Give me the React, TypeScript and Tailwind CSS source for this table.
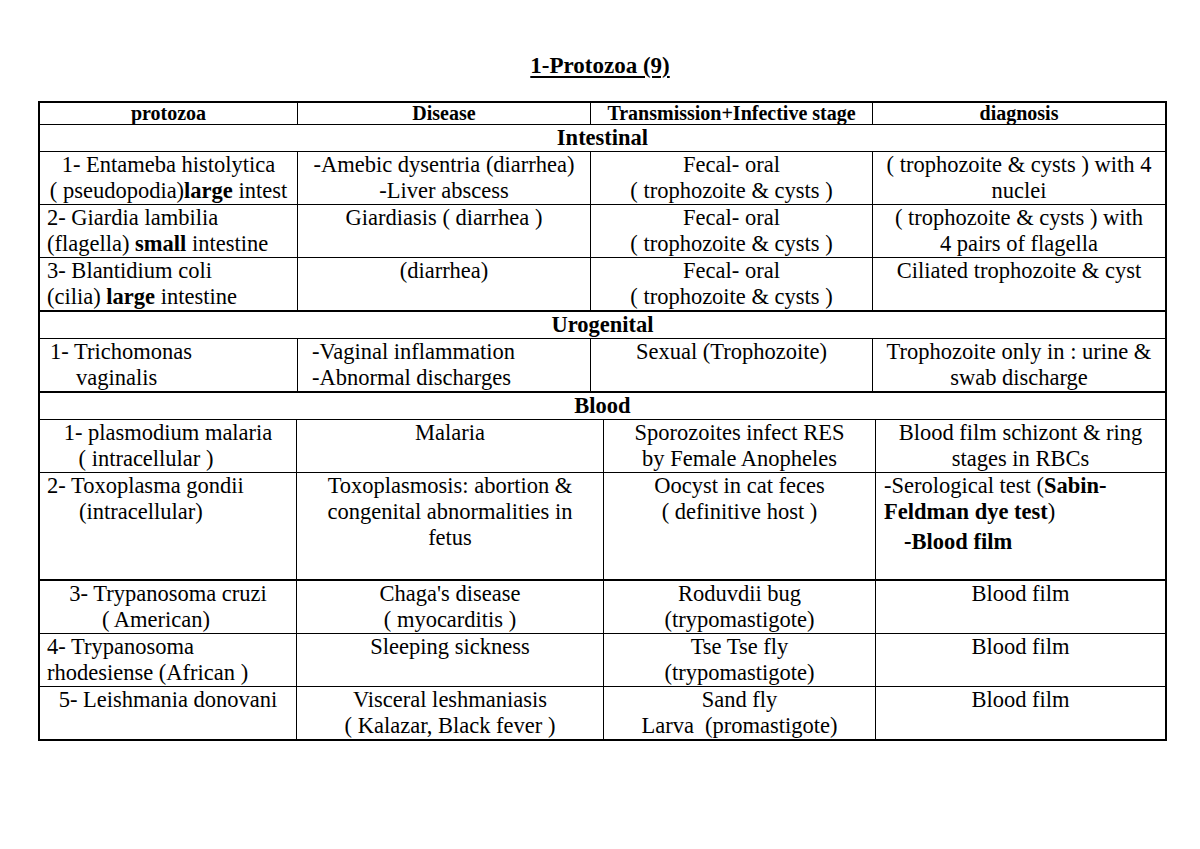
import type { ReactNode } from 'react';

// Column widths (each includes its 1px right rule)
const COLS_A = ['w-[258px]', 'w-[293px]', 'w-[282px]', 'w-[292px]'];
const COLS_B = ['w-[257px]', 'w-[307px]', 'w-[272px]', 'w-[289px]'];

function Cell({
  w,
  last = false,
  className = '',
  children,
}: {
  w: string;
  last?: boolean;
  className?: string;
  children?: ReactNode;
}) {
  return (
    <div
      className={`${w} shrink-0 ${last ? '' : 'border-r border-black'} ${className}`}
    >
      {children}
    </div>
  );
}

function Line({ className = '', children }: { className?: string; children: ReactNode }) {
  return <div className={`whitespace-nowrap ${className}`}>{children}</div>;
}

function Section({ title, thick = false }: { title: string; thick?: boolean }) {
  return (
    <div
      className={`${thick ? 'border-t-2' : 'border-t'} border-black text-center text-[22.5px] font-bold leading-[26px]`}
    >
      {title}
    </div>
  );
}

function Row({
  cols,
  cells,
  thick = false,
  className = '',
}: {
  cols: string[];
  cells: ReactNode[];
  thick?: boolean;
  className?: string;
}) {
  return (
    <div className={`flex ${thick ? 'border-t-2' : 'border-t'} border-black ${className}`}>
      {cells.map((c, i) => (
        <Cell key={i} w={cols[i]} last={i === cells.length - 1}>
          {c}
        </Cell>
      ))}
    </div>
  );
}

export default function App() {
  return (
    <div className="min-h-[849px] w-[1200px] bg-white [font-family:'Liberation_Serif','Times_New_Roman',serif] text-black">
      <div className="pt-[53px] text-center">
        <span className="text-[23px] font-bold leading-[26px] underline underline-offset-[3px]">
          1-Protozoa (9)
        </span>
      </div>

      <div className="ml-[38px] mt-[21px] w-[1129px] border-x-2 border-b-2 border-black text-[22.5px] leading-[26px]">
        {/* header */}
        <div className="flex border-t-2 border-black text-center text-[20px] font-bold leading-[21px]">
          <Cell w={COLS_A[0]}>protozoa</Cell>
          <Cell w={COLS_A[1]}>Disease</Cell>
          <Cell w={COLS_A[2]}>Transmission+Infective stage</Cell>
          <Cell w={COLS_A[3]} last>
            diagnosis
          </Cell>
        </div>

        <Section title="Intestinal" />

        <Row
          cols={COLS_A}
          cells={[
            <div className="text-center">
              <Line>1- Entameba histolytica</Line>
              <Line>
                ( pseudopodia)<b>large</b> intest
              </Line>
            </div>,
            <div className="text-center">
              <Line>-Amebic dysentria (diarrhea)</Line>
              <Line>-Liver abscess</Line>
            </div>,
            <div className="text-center">
              <Line>Fecal- oral</Line>
              <Line>( trophozoite &amp; cysts )</Line>
            </div>,
            <div className="text-center">
              <Line>( trophozoite &amp; cysts ) with 4</Line>
              <Line>nuclei</Line>
            </div>,
          ]}
        />
        <Row
          cols={COLS_A}
          cells={[
            <div className="pl-[7px]">
              <Line>2- Giardia lambilia</Line>
              <Line>
                (flagella) <b>small</b> intestine
              </Line>
            </div>,
            <div className="text-center">
              <Line>Giardiasis ( diarrhea )</Line>
            </div>,
            <div className="text-center">
              <Line>Fecal- oral</Line>
              <Line>( trophozoite &amp; cysts )</Line>
            </div>,
            <div className="text-center">
              <Line>( trophozoite &amp; cysts ) with</Line>
              <Line>4 pairs of flagella</Line>
            </div>,
          ]}
        />
        <Row
          cols={COLS_A}
          cells={[
            <div className="pl-[7px]">
              <Line>3- Blantidium coli</Line>
              <Line>
                (cilia) <b>large</b> intestine
              </Line>
            </div>,
            <div className="text-center">
              <Line>(diarrhea)</Line>
            </div>,
            <div className="text-center">
              <Line>Fecal- oral</Line>
              <Line>( trophozoite &amp; cysts )</Line>
            </div>,
            <div className="text-center">
              <Line>Ciliated trophozoite &amp; cyst</Line>
            </div>,
          ]}
        />

        <Section title="Urogenital" thick />

        <Row
          cols={COLS_A}
          cells={[
            <div className="pl-[10px]">
              <Line>1- Trichomonas</Line>
              <Line className="pl-[26px]">vaginalis</Line>
            </div>,
            <div className="pl-[14px]">
              <Line>-Vaginal inflammation</Line>
              <Line>-Abnormal discharges</Line>
            </div>,
            <div className="text-center">
              <Line>Sexual (Trophozoite)</Line>
            </div>,
            <div className="text-center">
              <Line>Trophozoite only in : urine &amp;</Line>
              <Line>swab discharge</Line>
            </div>,
          ]}
        />

        <Section title="Blood" thick />

        <Row
          cols={COLS_B}
          cells={[
            <div className="text-center">
              <Line>1- plasmodium malaria</Line>
              <Line className="pr-[44px]">( intracellular )</Line>
            </div>,
            <div className="text-center">
              <Line>Malaria</Line>
            </div>,
            <div className="text-center">
              <Line>Sporozoites infect RES</Line>
              <Line>by Female Anopheles</Line>
            </div>,
            <div className="text-center">
              <Line>Blood film schizont &amp; ring</Line>
              <Line>stages in RBCs</Line>
            </div>,
          ]}
        />
        <Row
          cols={COLS_B}
          className="min-h-[107px]"
          cells={[
            <div className="pl-[7px]">
              <Line>2- Toxoplasma gondii</Line>
              <Line className="pl-[32px]">(intracellular)</Line>
            </div>,
            <div className="text-center">
              <Line>Toxoplasmosis: abortion &amp;</Line>
              <Line>congenital abnormalities in</Line>
              <Line>fetus</Line>
            </div>,
            <div className="text-center">
              <Line>Oocyst in cat feces</Line>
              <Line>( definitive host )</Line>
            </div>,
            <div className="pl-[8px]">
              <Line>
                -Serological test (<b>Sabin-</b>
              </Line>
              <Line>
                <b>Feldman dye test</b>)
              </Line>
              <Line className="mt-[4px] pl-[20px] font-bold">-Blood film</Line>
            </div>,
          ]}
        />
        <Row
          cols={COLS_B}
          thick
          cells={[
            <div className="text-center">
              <Line>3- Trypanosoma cruzi</Line>
              <Line className="pr-[24px]">( American)</Line>
            </div>,
            <div className="text-center">
              <Line>Chaga's disease</Line>
              <Line>( myocarditis )</Line>
            </div>,
            <div className="text-center">
              <Line>Roduvdii bug</Line>
              <Line>(trypomastigote)</Line>
            </div>,
            <div className="text-center">
              <Line>Blood film</Line>
            </div>,
          ]}
        />
        <Row
          cols={COLS_B}
          cells={[
            <div className="pl-[7px]">
              <Line>4- Trypanosoma</Line>
              <Line>rhodesiense (African )</Line>
            </div>,
            <div className="text-center">
              <Line>Sleeping sickness</Line>
            </div>,
            <div className="text-center">
              <Line>Tse Tse fly</Line>
              <Line>(trypomastigote)</Line>
            </div>,
            <div className="text-center">
              <Line>Blood film</Line>
            </div>,
          ]}
        />
        <Row
          cols={COLS_B}
          cells={[
            <div className="text-center">
              <Line>5- Leishmania donovani</Line>
            </div>,
            <div className="text-center">
              <Line>Visceral leshmaniasis</Line>
              <Line>( Kalazar, Black fever )</Line>
            </div>,
            <div className="text-center">
              <Line>Sand fly</Line>
              <Line>Larva&nbsp; (promastigote)</Line>
            </div>,
            <div className="text-center">
              <Line>Blood film</Line>
            </div>,
          ]}
        />
      </div>
    </div>
  );
}
